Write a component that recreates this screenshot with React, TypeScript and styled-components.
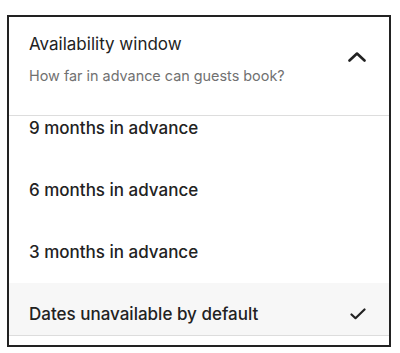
import * as React from 'react'
import styled, { createGlobalStyle } from 'styled-components'

const GlobalStyle = createGlobalStyle`
    body {
        margin: 0;
        background: #ffffff;
        font-family: 'Inter', 'Roboto', sans-serif;
        color: #222222;
    }
`

const Page = styled.div`
    padding: 15px 9px 0 7px;
`

const Panel = styled.div`
    box-sizing: border-box;
    width: 384px;
    height: 332px;
    border: 2px solid #222222;
    display: flex;
    flex-direction: column;
    overflow: hidden;
    background: #ffffff;
`

const Header = styled.div`
    display: flex;
    align-items: center;
    justify-content: space-between;
    padding: 15px 22px 29px 20px;
    border-bottom: 1px solid #dddddd;
    flex-shrink: 0;
`

const HeaderText = styled.div`
    display: flex;
    flex-direction: column;
`

const Title = styled.span`
    font-size: 17px;
    line-height: 24px;
    font-weight: 400;
    color: #222222;
`

const Subtitle = styled.span`
    margin-top: 10px;
    font-size: 14.4px;
    line-height: 20px;
    color: #717171;
`

const ToggleButton = styled.button`
    display: flex;
    align-items: center;
    justify-content: center;
    width: 20px;
    height: 20px;
    padding: 0;
    margin-bottom: 4px;
    border: none;
    background: none;
    cursor: pointer;
`

const OptionList = styled.div`
    height: 219px;
    flex-shrink: 0;
    overflow-y: auto;
    scrollbar-width: none;
`

const OptionRow = styled.div<{ selected?: boolean }>`
    display: flex;
    align-items: center;
    justify-content: space-between;
    height: 62px;
    padding: 0 23px 0 20px;
    background: ${p => (p.selected ? '#f7f7f7' : '#ffffff')};
    cursor: pointer;
`

const OptionText = styled.span`
    font-size: 17px;
    font-weight: 500;
    color: #222222;
`

const Footer = styled.div`
    flex: 1;
    border-top: 1px solid #dddddd;
`

const options = [
    '9 months in advance',
    '6 months in advance',
    '3 months in advance',
    'Dates unavailable by default',
]

export default function App() {
    const listRef = React.useRef<HTMLDivElement>(null)
    const [selected, setSelected] = React.useState(options.length - 1)

    React.useEffect(() => {
        if (listRef.current) {
            listRef.current.scrollTop = 19
        }
    }, [])

    return (
        <>
            <GlobalStyle />
            <Page>
                <Panel>
                    <Header>
                        <HeaderText>
                            <Title>Availability window</Title>
                            <Subtitle>How far in advance can guests book?</Subtitle>
                        </HeaderText>
                        <ToggleButton aria-label="Collapse">
                            <svg width="18" height="10" viewBox="0 0 18 10" fill="none">
                                <polyline
                                    points="1.5,8.5 9,1.5 16.5,8.5"
                                    stroke="#222222"
                                    strokeWidth="2.6"
                                    strokeLinecap="round"
                                    strokeLinejoin="round"
                                />
                            </svg>
                        </ToggleButton>
                    </Header>
                    <OptionList ref={listRef}>
                        {options.map((label, i) => (
                            <OptionRow key={label} selected={i === selected} onClick={() => setSelected(i)}>
                                <OptionText>{label}</OptionText>
                                {i === selected && (
                                    <svg width="16" height="12" viewBox="0 0 16 12" fill="none">
                                        <polyline
                                            points="1.5,6.5 5.5,10.2 14.5,1.5"
                                            stroke="#222222"
                                            strokeWidth="2.2"
                                            strokeLinecap="round"
                                            strokeLinejoin="round"
                                        />
                                    </svg>
                                )}
                            </OptionRow>
                        ))}
                    </OptionList>
                    <Footer />
                </Panel>
            </Page>
        </>
    )
}
